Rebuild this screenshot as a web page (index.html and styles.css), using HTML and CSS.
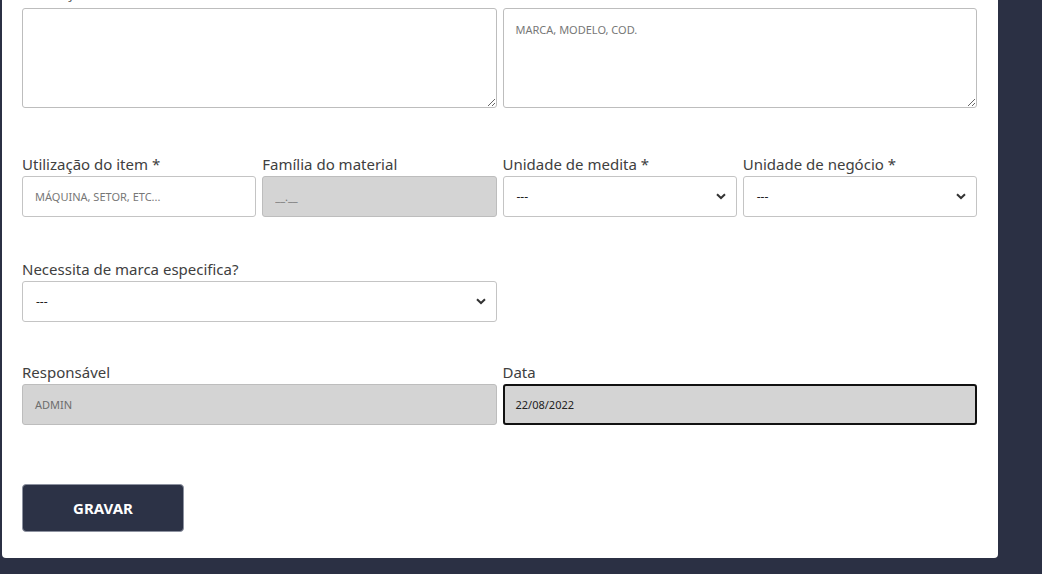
FILE: index.html
```html
<!DOCTYPE html>
<html lang="pt-BR">
<head>
<meta charset="utf-8">
<title>Cadastro de item</title>
<link rel="stylesheet" href="styles.css">
</head>
<body>
<div class="page">
  <form class="card">
    <div class="row row-1">
      <div class="field span-2">
        <label class="label">Descrição *</label>
        <textarea class="textarea"></textarea>
      </div>
      <div class="field span-2">
        <label class="label">Marca e modelo</label>
        <textarea class="textarea" placeholder="MARCA, MODELO, COD."></textarea>
      </div>
    </div>

    <div class="row row-2">
      <div class="field">
        <label class="label">Utilização do item *</label>
        <input class="input" type="text" placeholder="MÁQUINA, SETOR, ETC...">
      </div>
      <div class="field">
        <label class="label">Família do material</label>
        <input class="input input-disabled" type="text" placeholder="__.__" disabled>
      </div>
      <div class="field">
        <label class="label">Unidade de medita *</label>
        <div class="select"><span>---</span><svg class="chev" width="10" height="7" viewBox="0 0 10 7"><path d="M1 1.2 L5 5 L9 1.2" fill="none" stroke="#333" stroke-width="2"/></svg></div>
      </div>
      <div class="field">
        <label class="label">Unidade de negócio *</label>
        <div class="select"><span>---</span><svg class="chev" width="10" height="7" viewBox="0 0 10 7"><path d="M1 1.2 L5 5 L9 1.2" fill="none" stroke="#333" stroke-width="2"/></svg></div>
      </div>
    </div>

    <div class="row row-3">
      <div class="field span-2">
        <label class="label">Necessita de marca especifica?</label>
        <div class="select"><span>---</span><svg class="chev" width="10" height="7" viewBox="0 0 10 7"><path d="M1 1.2 L5 5 L9 1.2" fill="none" stroke="#333" stroke-width="2"/></svg></div>
      </div>
    </div>

    <div class="row row-4">
      <div class="field span-2">
        <label class="label">Responsável</label>
        <div class="input input-disabled value-muted">ADMIN</div>
      </div>
      <div class="field span-2">
        <label class="label">Data</label>
        <div class="input input-disabled input-focus">22/08/2022</div>
      </div>
    </div>

    <div class="actions">
      <button type="button" class="btn">GRAVAR</button>
    </div>
  </form>
</div>
</body>
</html>
```
FILE: styles.css
```css
* { box-sizing: border-box; }

html, body {
  margin: 0;
  height: 100%;
  overflow: hidden;
}

body {
  background: #2b3044;
  font-family: "Noto Sans", "Open Sans", sans-serif;
  color: #3b3b3b;
}

.page {
  padding: 0 44px 17px 2px;
}

.card {
  background: #ffffff;
  border-radius: 0 0 4px 4px;
  margin-top: -40px;
  padding: 20px 21px 26px 20px;
}

.row {
  display: grid;
  grid-template-columns: repeat(4, 1fr);
  column-gap: 6px;
}

.row-1 { margin-bottom: 44px; }
.row-2 { margin-bottom: 40px; }
.row-3 { margin-bottom: 38px; }
.row-4 { margin-bottom: 59px; }

.span-2 { grid-column: span 2; }

.field {
  display: flex;
  flex-direction: column;
  min-width: 0;
}

.label {
  font-size: 15px;
  line-height: 24px;
  height: 24px;
  color: #404040;
  white-space: nowrap;
}

.row-1 .label {
  height: 28px;
  line-height: 25px;
}

.textarea {
  display: block;
  width: 100%;
  height: 100px;
  border: 1px solid #bdbdbd;
  border-radius: 3px;
  padding: 13px 12px;
  font-family: "Noto Sans", sans-serif;
  font-size: 11px;
  resize: vertical;
  background: #fff;
  margin: 0;
}

.textarea::placeholder,
.input::placeholder {
  color: #777;
}

.input,
.select {
  display: flex;
  align-items: center;
  width: 100%;
  height: 41px;
  border: 1px solid #c4c4c4;
  border-radius: 3px;
  padding: 0 12px;
  font-family: "Noto Sans", sans-serif;
  font-size: 11px;
  background: #fff;
  color: #222;
  margin: 0;
}

.select {
  justify-content: space-between;
  padding: 0 10px 0 13px;
  font-size: 12px;
}

.chev { display: block; }

.input-disabled {
  background: #d4d4d4;
  border-color: #bdbdbd;
}

.value-muted { color: #6d6d6d; }

.input-focus {
  border: 2px solid #111;
  padding-left: 11px;
  color: #222;
}

.actions {
  display: flex;
}

.btn {
  width: 162px;
  height: 48px;
  background: #2c3246;
  border: 1px solid #8d92a0;
  border-radius: 4px;
  color: #fff;
  font-family: "Noto Sans", sans-serif;
  font-weight: 700;
  font-size: 15px;
  cursor: pointer;
}
```
